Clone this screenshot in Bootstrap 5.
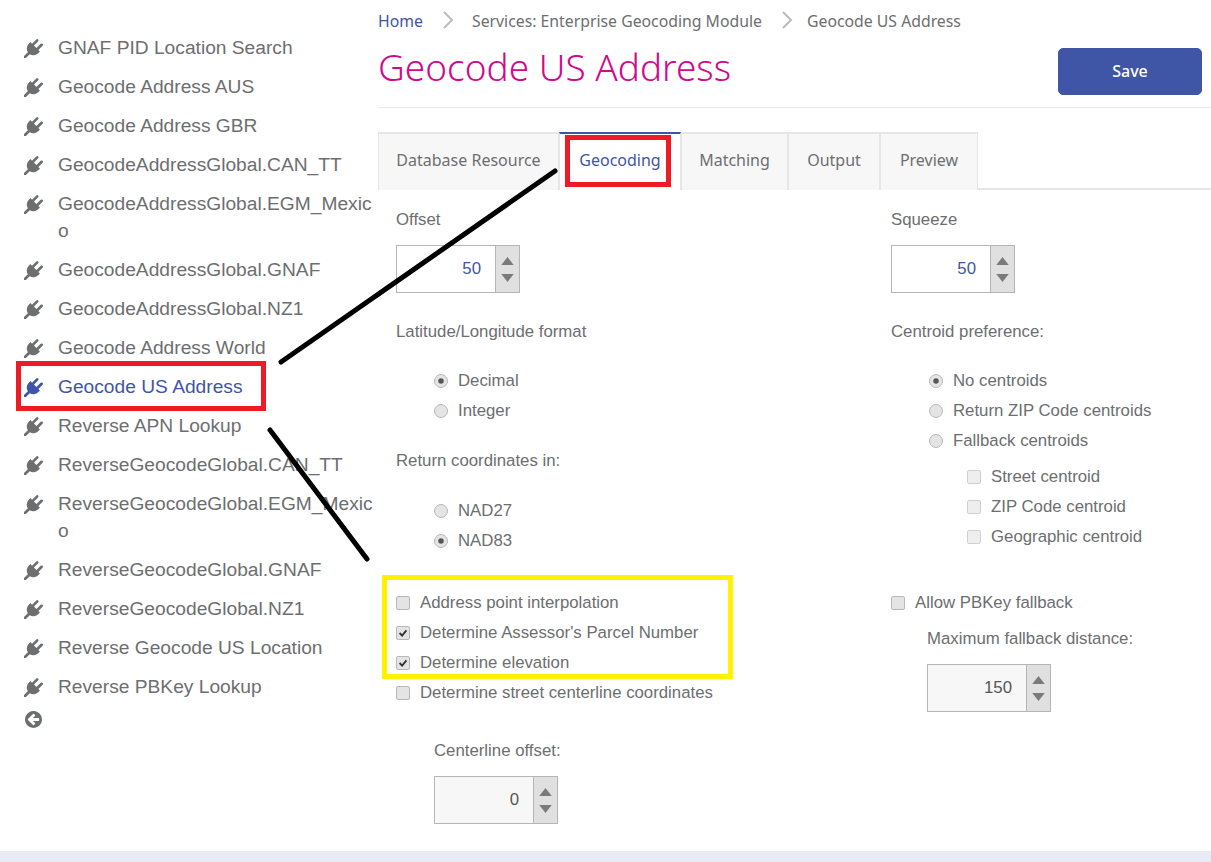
<!doctype html>
<html lang="en"><head><meta charset="utf-8"><title>Geocode US Address</title>
<link href="https://cdn.jsdelivr.net/npm/bootstrap@5.3.0/dist/css/bootstrap.min.css" rel="stylesheet">
<style>
html,body{height:862px;overflow:hidden}
body{font-family:"Liberation Sans",Arial,sans-serif;color:#6d6e70;background:#fff;font-size:16.8px}
.pg{position:relative;height:862px;display:flex;flex-direction:column}
.pg-body{flex:1 1 auto;display:flex;min-height:0}
.pg-foot{height:11px;background:#e8ebf6}
.side{width:378px;flex:none;padding:28px 0 0 24px}
.side li{display:flex;padding:6px 0;font-size:19.2px;line-height:27px;color:#6d6e70}
.side li svg{flex:none;width:19px;height:19px;margin:5px 15px 0 0;fill:currentColor}
.side li span{min-width:0;width:316px;overflow-wrap:anywhere}
.side li.on{color:#3f55a5}
.side-back{display:block;width:17px;height:17px;fill:#6d6e70;margin:5px 0 0 1px}
.main{flex:1 1 auto;min-width:0}
.sans2{font-family:"Noto Sans",sans-serif}
.crumbs{font-size:15.8px;line-height:24px;padding-top:9px;margin:0;color:#6d6e70}
.crumbs a{color:#3f55a5;text-decoration:none}
.crumbs svg{width:12px;height:18px;margin:0 18px 0 19px;vertical-align:-2px}
.crumbs svg.c2{margin:0 14px 0 19px}
.head-row{display:flex;justify-content:space-between;align-items:flex-start;border-bottom:1px solid #eaeaea;height:75px;padding-right:9px}
.ttl{font-size:37px;line-height:52px;font-weight:300;color:#cf0a8c;margin:8px 0 0}
.btn-save{width:144px;height:47px;margin-top:15px;padding-bottom:8px;background:#3f55a5;border-color:#3f55a5;color:#fff;font-size:16px;font-weight:500;border-radius:5px}
.tabz{margin-top:24px;border-bottom:2px solid #e6e6e6;height:58px;flex-wrap:nowrap}
.tabz .nav-link{height:58px;margin:0;padding:0 0 5px;display:flex;align-items:center;justify-content:center;background:#f7f7f7;border:2px solid #e6e6e6;border-left-width:1px;border-right-width:1px;border-bottom:0;border-radius:0;color:#6d6e70;font-size:16px}
.tabz .nav-link.active{background:#fff;color:#3f55a5;border-top:2px solid #3f55a5;border-left:1px solid #e6e6e6;border-right:1px solid #e6e6e6;height:58px}
.w1{width:181px}.w2{width:122px}.w3{width:107px}.w4{width:92px}.w5{width:98px}
.fgrid{display:flex;padding:18px 0 0 18px}
.fleft{width:495px;flex:none}.fright{flex:1 1 auto}
.lbl{display:block;line-height:24px;margin:0 0 13px;font-size:16.8px}
.spin{display:flex;width:124px;height:48px;border:1px solid #b5b5b5;background:#fff;margin-bottom:27px}
.spin-val{flex:1;padding:0 14px 0 0;border:0;background:transparent;text-align:right;color:#3f55a5;font-size:16.8px;line-height:46px;min-width:0;border-radius:0}
.spin-btns{width:24px;flex:none;background:#e0e0e0;border-left:1px solid #b5b5b5;display:flex;flex-direction:column;align-items:center;justify-content:center;gap:9px}
.spin-btns svg{display:block;width:13px;height:8px;fill:#7a7a7a}
.spin.ro{background:#f7f7f7}
.spin.ro .spin-val{color:#555}
.opt.form-check{display:flex;align-items:center;height:30px;min-height:0;margin:0;padding:0;font-size:16.8px;line-height:30px}
.opt .form-check-input{flex:none;float:none;margin:0 10px 0 0;width:14px;height:14px;background-color:#e4e4e4;border:1px solid #b8b8b8;opacity:1;box-shadow:none}
.opt .form-check-label,.opt .form-check-input:disabled~.form-check-label{opacity:1;color:#6d6e70}
.opt .form-check-input[type=checkbox]{border-radius:2px}
.opt .form-check-input:checked{background-color:#e4e4e4;border-color:#b8b8b8}
.opt .form-check-input[type=checkbox]:checked{background-image:url("data:image/svg+xml,%3csvg xmlns='http://www.w3.org/2000/svg' viewBox='0 0 14 14'%3e%3cpath fill='none' stroke='%23333' stroke-width='2.2' d='M3 7l3 3 5-6'/%3e%3c/svg%3e")}
.opt .form-check-input[type=radio]:checked{background-image:url("data:image/svg+xml,%3csvg xmlns='http://www.w3.org/2000/svg' viewBox='0 0 14 14'%3e%3ccircle cx='7' cy='7' r='3.2' fill='%23555'/%3e%3c/svg%3e")}
.radios{padding-left:38px;margin-bottom:23px;margin-top:22px}
.radios.nx{margin-top:23px;margin-bottom:0}
.sub{padding-left:38px;margin-top:6px}
.opt .form-check-input:disabled{background-color:#eee;border-color:#d0d0d0;opacity:1}
.checks{margin-top:-3px}
.ind1{padding:31px 0 0 38px}
.ind2{padding:9px 0 0 36px}
.ind2 .lbl{margin-bottom:13px}
.gap-l{height:35px}
.gap-r{height:39px}
.ann{position:absolute;left:0;top:0;width:1211px;height:862px;pointer-events:none}
.ann-box{position:absolute;border:5px solid #ed1c24}
.ann-a{left:16px;top:361px;width:250px;height:50px}
.ann-b{left:565px;top:135px;width:106px;height:52px}
.ann-c{left:382px;top:575px;width:351px;height:104px;border-color:#fff200}
</style></head><body>
<div class="pg">
 <div class="pg-body">
  <aside class="side">
   <svg width="0" height="0" class="d-block"><defs><path id="plug" d="M1755 453q37 38 37 90.5t-37 90.5l-401 400 150 150-160 160q-163 163-389.5 186.5t-411.5-100.5l-362 362h-181v-181l362-362q-124-185-100.5-411.5t186.5-389.5l160-160 150 150 400-401q38-37 91-37t90 37 37 90.5-37 90.5l-400 401 234 234 401-400q38-37 91-37t90 37z"/></defs></svg>
   <ul class="list-unstyled m-0" id="sl">
    <li><svg viewBox="0 0 1792 1792"><use href="#plug"/></svg><span>GNAF PID Location Search</span></li>
    <li><svg viewBox="0 0 1792 1792"><use href="#plug"/></svg><span>Geocode Address AUS</span></li>
    <li><svg viewBox="0 0 1792 1792"><use href="#plug"/></svg><span>Geocode Address GBR</span></li>
    <li><svg viewBox="0 0 1792 1792"><use href="#plug"/></svg><span>GeocodeAddressGlobal.CAN_TT</span></li>
    <li><svg viewBox="0 0 1792 1792"><use href="#plug"/></svg><span>GeocodeAddressGlobal.EGM_Mexico</span></li>
    <li><svg viewBox="0 0 1792 1792"><use href="#plug"/></svg><span>GeocodeAddressGlobal.GNAF</span></li>
    <li><svg viewBox="0 0 1792 1792"><use href="#plug"/></svg><span>GeocodeAddressGlobal.NZ1</span></li>
    <li><svg viewBox="0 0 1792 1792"><use href="#plug"/></svg><span>Geocode Address World</span></li>
    <li class="on"><svg viewBox="0 0 1792 1792"><use href="#plug"/></svg><span>Geocode US Address</span></li>
    <li><svg viewBox="0 0 1792 1792"><use href="#plug"/></svg><span>Reverse APN Lookup</span></li>
    <li><svg viewBox="0 0 1792 1792"><use href="#plug"/></svg><span>ReverseGeocodeGlobal.CAN_TT</span></li>
    <li><svg viewBox="0 0 1792 1792"><use href="#plug"/></svg><span>ReverseGeocodeGlobal.EGM_Mexico</span></li>
    <li><svg viewBox="0 0 1792 1792"><use href="#plug"/></svg><span>ReverseGeocodeGlobal.GNAF</span></li>
    <li><svg viewBox="0 0 1792 1792"><use href="#plug"/></svg><span>ReverseGeocodeGlobal.NZ1</span></li>
    <li><svg viewBox="0 0 1792 1792"><use href="#plug"/></svg><span>Reverse Geocode US Location</span></li>
    <li><svg viewBox="0 0 1792 1792"><use href="#plug"/></svg><span>Reverse PBKey Lookup</span></li>
   </ul>
   <svg class="side-back" viewBox="0 128 1536 1536"><path d="M1280 960v-128q0-26-19-45t-45-19h-502l189-189q19-19 19-45t-19-45l-91-91q-18-18-45-18t-45 18l-362 362-91 91q-18 18-18 45t18 45l91 91 362 362q18 18 45 18t45-18l91-91q18-18 18-45t-18-45l-189-189h502q26 0 45-19t19-45zm256-64q0 209-103 385.5t-279.5 279.5-385.5 103-385.5-103-279.5-279.5-103-385.5 103-385.5 279.5-279.5 385.5-103 385.5 103 279.5 279.5 103 385.5z"/></svg>
  </aside>
  <main class="main">
   <p class="crumbs sans2"><a href="#">Home</a><svg viewBox="0 0 12 18"><path d="M2 1l8 8-8 8" fill="none" stroke="#bbb" stroke-width="2"/></svg>Services: Enterprise Geocoding Module<svg class="c2" viewBox="0 0 12 18"><path d="M2 1l8 8-8 8" fill="none" stroke="#bbb" stroke-width="2"/></svg>Geocode US Address</p>
   <div class="head-row">
    <h1 class="ttl sans2">Geocode US Address</h1>
    <button class="btn btn-save sans2" type="button">Save</button>
   </div>
   <ul class="nav nav-tabs tabz sans2">
    <li class="nav-item"><a class="nav-link w1" href="#">Database Resource</a></li>
    <li class="nav-item"><a class="nav-link active w2" href="#">Geocoding</a></li>
    <li class="nav-item"><a class="nav-link w3" href="#">Matching</a></li>
    <li class="nav-item"><a class="nav-link w4" href="#">Output</a></li>
    <li class="nav-item"><a class="nav-link w5" href="#">Preview</a></li>
   </ul>
   <div class="fgrid">
    <div class="fleft">
     <label class="lbl">Offset</label>
     <div class="spin"><input class="spin-val form-control" value="50"><div class="spin-btns"><svg viewBox="0 0 14 9"><path d="M7 0l7 9H0z"/></svg><svg viewBox="0 0 14 9"><path d="M0 0h14L7 9z"/></svg></div></div>
     <label class="lbl m-0">Latitude/Longitude format</label>
     <div class="radios">
      <div class="form-check opt"><input class="form-check-input" type="radio" name="a" checked><label class="form-check-label">Decimal</label></div>
      <div class="form-check opt"><input class="form-check-input" type="radio" name="a"><label class="form-check-label">Integer</label></div>
     </div>
     <label class="lbl m-0">Return coordinates in:</label>
     <div class="radios nx">
      <div class="form-check opt"><input class="form-check-input" type="radio" name="b"><label class="form-check-label">NAD27</label></div>
      <div class="form-check opt"><input class="form-check-input" type="radio" name="b" checked><label class="form-check-label">NAD83</label></div>
     </div>
     <div class="gap-l"></div>
     <div class="checks">
      <div class="form-check opt"><input class="form-check-input" type="checkbox"><label class="form-check-label">Address point interpolation</label></div>
      <div class="form-check opt"><input class="form-check-input" type="checkbox" checked><label class="form-check-label">Determine Assessor's Parcel Number</label></div>
      <div class="form-check opt"><input class="form-check-input" type="checkbox" checked><label class="form-check-label">Determine elevation</label></div>
      <div class="form-check opt"><input class="form-check-input" type="checkbox"><label class="form-check-label">Determine street centerline coordinates</label></div>
     </div>
     <div class="ind1">
      <label class="lbl">Centerline offset:</label>
      <div class="spin ro"><input class="spin-val form-control" value="0"><div class="spin-btns"><svg viewBox="0 0 14 9"><path d="M7 0l7 9H0z"/></svg><svg viewBox="0 0 14 9"><path d="M0 0h14L7 9z"/></svg></div></div>
     </div>
    </div>
    <div class="fright">
     <label class="lbl">Squeeze</label>
     <div class="spin"><input class="spin-val form-control" value="50"><div class="spin-btns"><svg viewBox="0 0 14 9"><path d="M7 0l7 9H0z"/></svg><svg viewBox="0 0 14 9"><path d="M0 0h14L7 9z"/></svg></div></div>
     <label class="lbl m-0">Centroid preference:</label>
     <div class="radios mb-0">
      <div class="form-check opt"><input class="form-check-input" type="radio" name="c" checked><label class="form-check-label">No centroids</label></div>
      <div class="form-check opt"><input class="form-check-input" type="radio" name="c"><label class="form-check-label">Return ZIP Code centroids</label></div>
      <div class="form-check opt"><input class="form-check-input" type="radio" name="c"><label class="form-check-label">Fallback centroids</label></div>
      <div class="sub">
       <div class="form-check opt"><input class="form-check-input" type="checkbox" disabled><label class="form-check-label">Street centroid</label></div>
       <div class="form-check opt"><input class="form-check-input" type="checkbox" disabled><label class="form-check-label">ZIP Code centroid</label></div>
       <div class="form-check opt"><input class="form-check-input" type="checkbox" disabled><label class="form-check-label">Geographic centroid</label></div>
      </div>
     </div>
     <div class="gap-r"></div>
     <div class="checks">
      <div class="form-check opt"><input class="form-check-input" type="checkbox"><label class="form-check-label">Allow PBKey fallback</label></div>
     </div>
     <div class="ind2">
      <label class="lbl">Maximum fallback distance:</label>
      <div class="spin ro"><input class="spin-val form-control" value="150"><div class="spin-btns"><svg viewBox="0 0 14 9"><path d="M7 0l7 9H0z"/></svg><svg viewBox="0 0 14 9"><path d="M0 0h14L7 9z"/></svg></div></div>
     </div>
    </div>
   </div>
  </main>
 </div>
 <div class="pg-foot"></div>
 <div class="ann">
  <div class="ann-box ann-a"></div>
  <div class="ann-box ann-b"></div>
  <div class="ann-box ann-c"></div>
  <svg width="1211" height="862" class="d-block"><path d="M555 171L281 362M270 430L367 559" stroke="#000" stroke-width="5" stroke-linecap="round" fill="none"/></svg>
 </div>
</div>
<script src="https://cdn.jsdelivr.net/npm/bootstrap@5.3.0/dist/js/bootstrap.bundle.min.js"></script>
</body></html>
